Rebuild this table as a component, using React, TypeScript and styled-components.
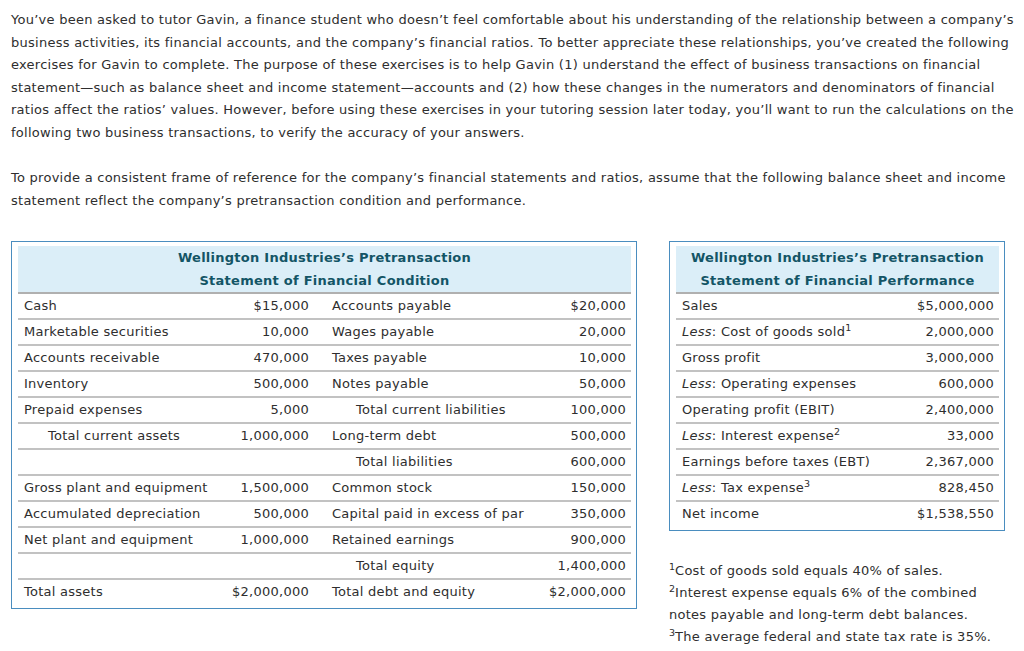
import React from "react";
import styled, { createGlobalStyle } from "styled-components";

const GlobalStyle = createGlobalStyle`
  html, body { margin: 0; padding: 0; background: #fff; }
  body {
    font-family: "DejaVu Sans", Verdana, sans-serif;
    font-size: 13px;
    letter-spacing: 0.26px;
    color: #2e2e2e;
  }
`;

const Page = styled.div`
  padding: 9px 11px 0 11px;
`;

const Para = styled.p`
  margin: 0 0 22.6px 0;
  line-height: 22.6px;
  white-space: nowrap;
`;

const Tables = styled.div`
  display: flex;
  align-items: flex-start;
  gap: 32px;
  margin-top: 29px;
`;

const Box = styled.div<{ $width: number }>`
  width: ${(p) => p.$width}px;
  box-sizing: border-box;
  border: 1px solid #4a8dbf;
  padding: 4px 5px 4px 6px;
`;

const Header = styled.div`
  background: #dbeef8;
  text-align: center;
  font-weight: bold;
  color: #135566;
  line-height: 23px;
  border-bottom: 2px solid #b0b0b0;
`;

const Row = styled.div<{ $cols: string }>`
  display: grid;
  grid-template-columns: ${(p) => p.$cols};
  line-height: 24px;
  height: 24px;
  border-bottom: 2px solid #c2c2c2;
  &:last-child {
    border-bottom: none;
  }
`;

const Cell = styled.div<{ $right?: boolean; $indent?: boolean; $padL?: number; $padR?: number }>`
  white-space: nowrap;
  text-align: ${(p) => (p.$right ? "right" : "left")};
  padding-left: ${(p) => (p.$padL ?? 6) + (p.$indent ? 24 : 0)}px;
  padding-right: ${(p) => p.$padR ?? 6}px;
`;

const Sup = styled.sup`
  font-size: 9.5px;
  line-height: 0;
  vertical-align: 5px;
  letter-spacing: 0;
`;

const RightCol = styled.div`
  display: flex;
  flex-direction: column;
  width: 336px;
`;

const Notes = styled.div`
  margin-top: 29px;
  line-height: 22px;
`;

const Note = styled.div``;

type BSRow = [string, string, string, string, boolean?, boolean?];

const bsRows: BSRow[] = [
  ["Cash", "$15,000", "Accounts payable", "$20,000"],
  ["Marketable securities", "10,000", "Wages payable", "20,000"],
  ["Accounts receivable", "470,000", "Taxes payable", "10,000"],
  ["Inventory", "500,000", "Notes payable", "50,000"],
  ["Prepaid expenses", "5,000", "Total current liabilities", "100,000", false, true],
  ["Total current assets", "1,000,000", "Long-term debt", "500,000", true, false],
  ["", "", "Total liabilities", "600,000", false, true],
  ["Gross plant and equipment", "1,500,000", "Common stock", "150,000"],
  ["Accumulated depreciation", "500,000", "Capital paid in excess of par", "350,000"],
  ["Net plant and equipment", "1,000,000", "Retained earnings", "900,000"],
  ["", "", "Total equity", "1,400,000", false, true],
  ["Total assets", "$2,000,000", "Total debt and equity", "$2,000,000"],
];

type ISRow = { less?: boolean; label: string; sup?: string; value: string };

const isRows: ISRow[] = [
  { label: "Sales", value: "$5,000,000" },
  { less: true, label: "Cost of goods sold", sup: "1", value: "2,000,000" },
  { label: "Gross profit", value: "3,000,000" },
  { less: true, label: "Operating expenses", value: "600,000" },
  { label: "Operating profit (EBIT)", value: "2,400,000" },
  { less: true, label: "Interest expense", sup: "2", value: "33,000" },
  { label: "Earnings before taxes (EBT)", value: "2,367,000" },
  { less: true, label: "Tax expense", sup: "3", value: "828,450" },
  { label: "Net income", value: "$1,538,550" },
];

const BS_COLS = "197px 100px 210px 1fr";
const IS_COLS = "1fr auto";

export default function App() {
  return (
    <>
      <GlobalStyle />
      <Page>
        <Para>
          You’ve been asked to tutor Gavin, a finance student who doesn’t feel comfortable about his understanding of the relationship between a company’s
          <br />
          business activities, its financial accounts, and the company’s financial ratios. To better appreciate these relationships, you’ve created the following
          <br />
          exercises for Gavin to complete. The purpose of these exercises is to help Gavin (1) understand the effect of business transactions on financial
          <br />
          statement—such as balance sheet and income statement—accounts and (2) how these changes in the numerators and denominators of financial
          <br />
          ratios affect the ratios’ values. However, before using these exercises in your tutoring session later today, you’ll want to run the calculations on the
          <br />
          following two business transactions, to verify the accuracy of your answers.
        </Para>
        <Para>
          To provide a consistent frame of reference for the company’s financial statements and ratios, assume that the following balance sheet and income
          <br />
          statement reflect the company’s pretransaction condition and performance.
        </Para>
        <Tables>
          <Box $width={626}>
            <Header>
              Wellington Industries’s Pretransaction
              <br />
              Statement of Financial Condition
            </Header>
            {bsRows.map((r, i) => (
              <Row key={i} $cols={BS_COLS}>
                <Cell $indent={r[4]}>{r[0]}</Cell>
                <Cell $right>{r[1]}</Cell>
                <Cell $padL={17} $indent={r[5]}>{r[2]}</Cell>
                <Cell $right $padR={5}>{r[3]}</Cell>
              </Row>
            ))}
          </Box>
          <RightCol>
            <Box $width={336}>
              <Header>
                Wellington Industries’s Pretransaction
                <br />
                Statement of Financial Performance
              </Header>
              {isRows.map((r, i) => (
                <Row key={i} $cols={IS_COLS}>
                  <Cell>
                    {r.less ? (
                      <>
                        <i>Less</i>:{" "}
                      </>
                    ) : null}
                    {r.label}
                    {r.sup ? <Sup>{r.sup}</Sup> : null}
                  </Cell>
                  <Cell $right $padR={5}>
                    {r.value}
                  </Cell>
                </Row>
              ))}
            </Box>
            <Notes>
              <Note>
                <Sup>1</Sup>Cost of goods sold equals 40% of sales.
              </Note>
              <Note>
                <Sup>2</Sup>Interest expense equals 6% of the combined
                <br />
                notes payable and long-term debt balances.
              </Note>
              <Note>
                <Sup>3</Sup>The average federal and state tax rate is 35%.
              </Note>
            </Notes>
          </RightCol>
        </Tables>
      </Page>
    </>
  );
}
